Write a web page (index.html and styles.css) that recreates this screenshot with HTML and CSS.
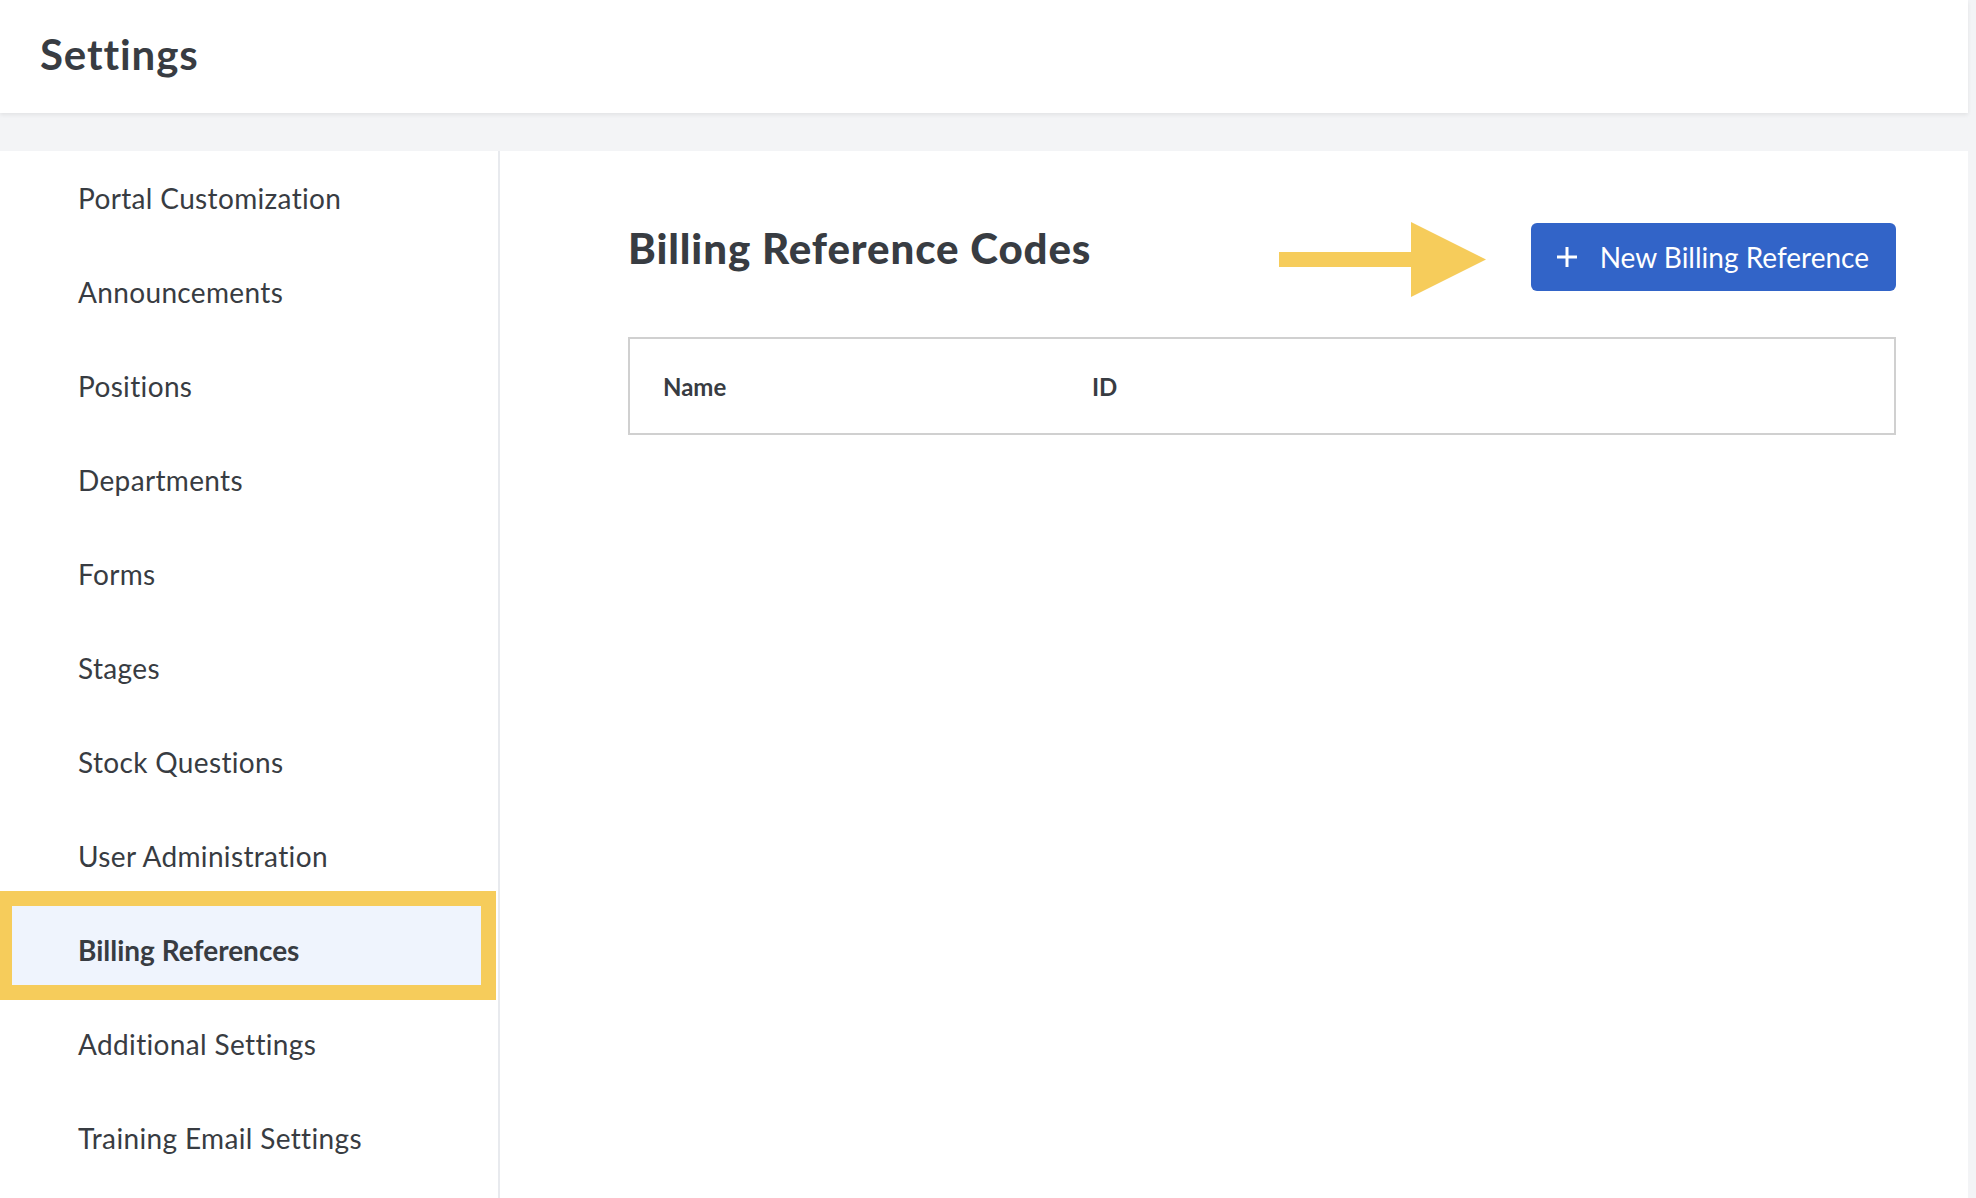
FILE: index.html
```html
<!DOCTYPE html>
<html lang="en">
<head>
  <meta charset="UTF-8" />
  <meta name="viewport" content="width=device-width, initial-scale=1.0"/>
  <title>Settings</title>
  <link rel="stylesheet" href="styles.css">
</head>
<body>
  <div class="page">
    <header class="topbar">
      <h1>Settings</h1>
    </header>

    <div class="layout">
      <nav class="sidebar">
        <a class="nav-item" href="#">Portal Customization</a>
        <a class="nav-item" href="#">Announcements</a>
        <a class="nav-item" href="#">Positions</a>
        <a class="nav-item" href="#">Departments</a>
        <a class="nav-item" href="#">Forms</a>
        <a class="nav-item" href="#">Stages</a>
        <a class="nav-item" href="#">Stock Questions</a>
        <a class="nav-item" href="#">User Administration</a>
        <a class="nav-item active" href="#">Billing References</a>
        <a class="nav-item" href="#">Additional Settings</a>
        <a class="nav-item" href="#">Training Email Settings</a>
      </nav>

      <main class="content">
        <div class="content-head">
          <h2>Billing Reference Codes</h2>
          <svg class="pointer" width="207" height="76" viewBox="0 0 207 76">
            <rect x="0" y="30" width="133" height="15" fill="#f6cc5b"/>
            <polygon points="132,0 207,37.5 132,75" fill="#f6cc5b"/>
          </svg>
          <button class="btn">
            <svg class="plus" width="22" height="22" viewBox="0 0 22 22">
              <line x1="11" y1="1" x2="11" y2="21" stroke="#fff" stroke-width="3"/>
              <line x1="1" y1="11" x2="21" y2="11" stroke="#fff" stroke-width="3"/>
            </svg>
            <span>New Billing Reference</span>
          </button>
        </div>

        <table class="codes">
          <thead>
            <tr>
              <th class="col-name">Name</th>
              <th>ID</th>
            </tr>
          </thead>
        </table>
      </main>
    </div>
  </div>
</body>
</html>
```

FILE: styles.css
```css
body {
  margin: 0;
  background: #f3f4f6;
  font-family: Lato, "Noto Sans", sans-serif;
  color: #383c42;
}

.page {
  width: 1968px;
  height: 1198px;
  display: flex;
  flex-direction: column;
}

.topbar {
  height: 113px;
  box-sizing: border-box;
  background: #ffffff;
  display: flex;
  align-items: center;
  padding: 0 0 5px 40px;
  box-shadow: 0 2px 4px rgba(0,0,0,0.07);
  position: relative;
  z-index: 1;
}

.topbar h1 {
  margin: 0;
  font-size: 42px;
  font-weight: 700;
  letter-spacing: 0.9px;
}

.layout {
  flex: 1;
  display: flex;
  margin-top: 38px;
}

.sidebar {
  width: 498px;
  background: #ffffff;
  border-right: 2px solid #e8eaee;
  padding-top: 3px;
  display: flex;
  flex-direction: column;
}

.nav-item {
  height: 79px;
  box-sizing: border-box;
  margin: 0 17px 15px 12px;
  padding: 8px 0 0 66px;
  display: flex;
  align-items: center;
  font-size: 28px;
  letter-spacing: 0.35px;
  color: #383c42;
  text-decoration: none;
}

.nav-item.active {
  background: #eff4fd;
  font-weight: 700;
  letter-spacing: 0;
  outline: 15px solid #f6cc5b;
}

.content {
  flex: 1;
  background: #ffffff;
  padding: 72px 72px 0 128px;
}

.content-head {
  height: 68px;
  display: flex;
  align-items: flex-start;
}

.content-head h2 {
  margin: 0;
  font-size: 42px;
  line-height: 50px;
  font-weight: 900;
  letter-spacing: 0.9px;
}

.pointer {
  margin-left: auto;
  margin-right: 45px;
  margin-top: -1px;
  flex-shrink: 0;
}

.btn {
  height: 68px;
  background: #3264c8;
  color: #ffffff;
  border: none;
  border-radius: 6px;
  padding: 0 27px 0 25px;
  display: flex;
  align-items: center;
  gap: 22px;
  font-family: inherit;
  font-size: 28px;
  cursor: pointer;
}

.codes {
  width: 100%;
  margin-top: 46px;
  border: 2px solid #d0d0d0;
  border-collapse: collapse;
}

.codes th {
  height: 94px;
  text-align: left;
  font-size: 24px;
  font-weight: 700;
  padding: 0;
}

.codes .col-name {
  width: 429px;
  padding-left: 33px;
}
```
